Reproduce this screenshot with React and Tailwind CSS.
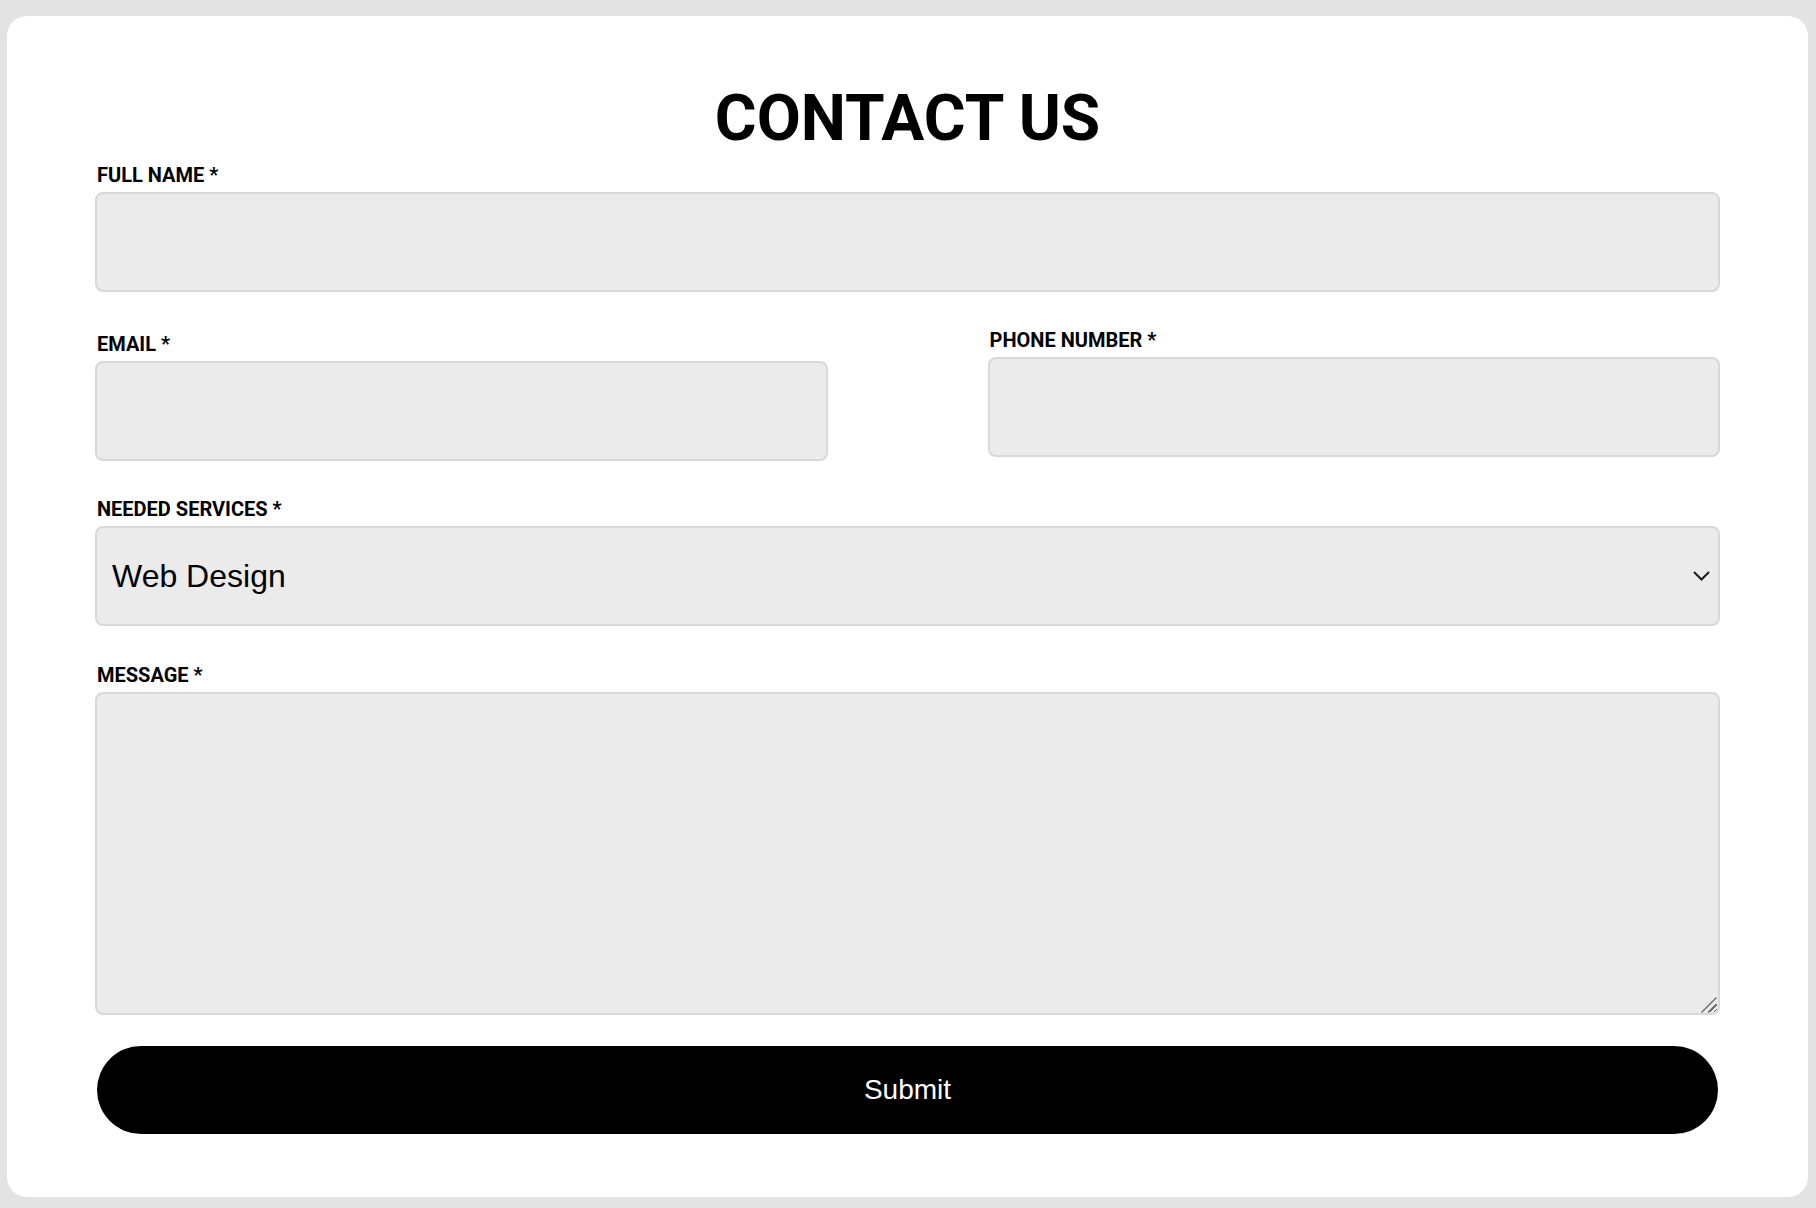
import { useState } from "react";

const labelCls =
  "block pl-[2px] text-[20px] leading-[20px] font-bold text-black mb-[7px] font-['Roboto',sans-serif]";

const fieldCls =
  "block w-full h-[100px] rounded-[8px] border-2 border-[#d8d8d8] bg-[#ebebeb] outline-none";

function Field({ label, className = "" }) {
  return (
    <div className={className}>
      <label className={labelCls}>{label} *</label>
      <input type="text" className={fieldCls} />
    </div>
  );
}

export default function App() {
  const [service, setService] = useState("Web Design");

  return (
    <div className="min-h-screen bg-[#e3e3e3] pt-[16px] pl-[7px] pr-[8px] pb-[11px]">
      <form
        onSubmit={(e) => e.preventDefault()}
        className="bg-white rounded-[20px] px-[88px] pt-[71px] pb-[63px]"
      >
        <h1 className="text-center text-[64px] leading-[64px] font-bold text-black font-['Roboto',sans-serif]">
          CONTACT US
        </h1>

        <Field label="FULL NAME" className="mt-[14px]" />

        <div className="grid grid-cols-2 gap-x-[160px] mt-[38px] items-start">
          <Field label="EMAIL" className="pt-[4px]" />
          <Field label="PHONE NUMBER" />
        </div>

        {/* services */}
        <div className="mt-[38px]">
          <label className={labelCls}>NEEDED SERVICES *</label>
          <div className="relative">
            <select
              value={service}
              onChange={(e) => setService(e.target.value)}
              className={`${fieldCls} appearance-none pl-[15px] text-[32px] text-black font-['Liberation_Sans',Arial,sans-serif]`}
            >
              <option>Web Design</option>
              <option>Web Development</option>
              <option>SEO</option>
              <option>Branding</option>
            </select>
            <svg
              className="absolute right-[10px] top-1/2 -translate-y-1/2 pointer-events-none"
              width="17"
              height="11"
              viewBox="0 0 17 11"
              fill="none"
            >
              <path d="M1 1.5l7.5 7.5L16 1.5" stroke="#1a1a1a" strokeWidth="2" />
            </svg>
          </div>
        </div>

        {/* message */}
        <div className="mt-[39px]">
          <label className={labelCls}>MESSAGE *</label>
          <div className="relative">
            <textarea className="block w-full h-[323px] rounded-[8px] border-2 border-[#d8d8d8] bg-[#ebebeb] outline-none" />
            <svg
              className="absolute right-[3px] bottom-[2px] pointer-events-none"
              width="16"
              height="16"
              viewBox="0 0 16 16"
              fill="none"
            >
              <path d="M0.5 15.5L15.5 0.5M7 15.5L15.5 7" stroke="#666" strokeWidth="1.3" />
            </svg>
          </div>
        </div>

        <button
          type="submit"
          className="block w-[calc(100%-4px)] mx-auto mt-[31px] h-[88px] rounded-full bg-black text-white text-[28px] font-['Liberation_Sans',Arial,sans-serif]"
        >
          Submit
        </button>
      </form>
    </div>
  );
}
